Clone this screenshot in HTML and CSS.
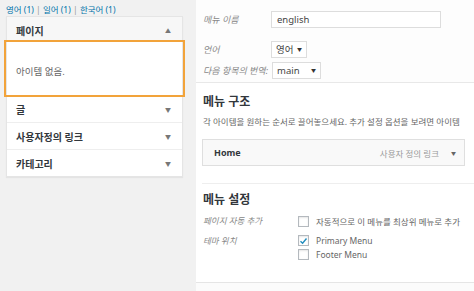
FILE: index.html
```html
<!DOCTYPE html>
<html lang="ko">
<head>
<meta charset="utf-8">
<link rel="stylesheet" href="styles.css">
</head>
<body>
<div class="page">
  <div class="left">
    <div class="langs"><a>영어 (1)</a> <span class="sep">|</span> <a>일어 (1)</a> <span class="sep">|</span> <a>한국어 (1)</a></div>
    <div class="accordion">
      <div class="acc-head open"><span>페이지</span><span class="arrow">▲</span></div>
      <div class="acc-body">아이템 없음.</div>
      <div class="acc-head"><span>글</span><span class="arrow">▼</span></div>
      <div class="acc-head"><span>사용자정의 링크</span><span class="arrow">▼</span></div>
      <div class="acc-head last"><span>카테고리</span><span class="arrow">▼</span></div>
    </div>
  </div>
  <div class="right">
    <div class="menu-header">
      <div class="field r1"><span class="lbl">메뉴 이름</span><span class="input">english</span></div>
      <div class="field r2"><span class="lbl">언어</span><span class="select s-lang">영어<i>▼</i></span></div>
      <div class="field r3"><span class="lbl">다음 항목의 번역:</span><span class="select s-main">main<i>▼</i></span></div>
    </div>
    <div class="menu-body">
      <h3 class="title">메뉴 구조</h3>
      <p class="desc">각 아이템을 원하는 순서로 끌어놓으세요. 추가 설정 옵션을 보려면 아이템</p>
      <div class="item"><span class="item-title">Home</span><span class="item-type">사용자 정의 링크</span><span class="item-arrow">▼</span></div>
      <div class="settings">
        <h3 class="title">메뉴 설정</h3>
        <div class="set-row first"><span class="lbl">페이지 자동 추가</span><span class="opt"><span class="cb"></span>자동적으로 이 메뉴를 최상위 메뉴로 추가</span></div>
        <div class="set-row"><span class="lbl">테마 위치</span>
          <span class="opts">
            <span class="opt"><span class="cb checked"><svg viewBox="0 0 12 12" width="10" height="10"><path d="M2 6.2 L4.8 9 L10 2.6" fill="none" stroke="#1e8cbe" stroke-width="1.8"/></svg></span>Primary Menu</span>
            <span class="opt"><span class="cb"></span>Footer Menu</span>
          </span>
        </div>
      </div>
    </div>
    <div class="menu-footer"></div>
  </div>
</div>
</body>
</html>
```
FILE: styles.css
```css
* { box-sizing: border-box; }
html, body { margin: 0; padding: 0; }
body {
  background: #f1f1f1;
  font-family: "Noto Sans", "Noto Sans CJK KR", sans-serif;
  color: #555;
  width: 474px;
  height: 291px;
  overflow: hidden;
}
.page { display: flex; align-items: flex-start; }
.left { width: 177px; margin-left: 6px; flex: none; }
.langs {
  height: 16px;
  font-size: 8.5px;
  line-height: 16px;
  padding-top: 2px;
  color: #0073aa;
  white-space: nowrap;
}
.langs .sep { color: #999; }
.accordion {
  background: #fff;
  border: 1px solid #e5e5e5;
  box-shadow: 0 1px 1px rgba(0,0,0,0.05);
}
.acc-head {
  height: 27px;
  display: flex;
  align-items: center;
  justify-content: space-between;
  padding: 0 11px 0 9px;
  font-size: 10px;
  font-weight: bold;
  color: #32373c;
  border-top: 1px solid #eee;
  background: #fff;
}
.acc-head.open { border-top: none; background: #f7f7f7; height: 25px; padding-top: 1px; }
.arrow { font-size: 6px; color: #777; font-weight: normal; }
.acc-body {
  height: 53px;
  outline: 2px solid #f2a33a;
  display: flex;
  align-items: center;
  padding: 4px 10px 0;
  font-size: 9.5px;
  color: #666;
  position: relative;
  z-index: 1;
  margin: 0 -1px;
}
.right {
  margin-left: 13px;
  flex: 1;
  background: #fff;
  min-width: 0;
}
.menu-header {
  background: #fdfdfd;
  border-bottom: 1px solid #e8e8e8;
  padding: 11px 0 6px 7px;
  height: 83px;
}
.field { display: flex; align-items: center; }
.field .lbl { width: 68px; flex: none; font-style: italic; font-size: 9px; color: #888; white-space: nowrap; }
.r2 { margin-top: 13px; }
.r3 { margin-top: 4px; }
.input {
  width: 170px; height: 17px; border: 1px solid #ddd; background: #fff;
  font-size: 9.5px; color: #444; padding-left: 5px; line-height: 15px;
}
.select {
  height: 17px; border: 1px solid #ddd; background: #fff;
  font-size: 9.5px; color: #444; padding: 0 4px; line-height: 15px;
  display: flex; justify-content: space-between; align-items: center;
}
.select i { font-style: normal; font-size: 5px; color: #333; }
.s-lang { width: 36px; }
.s-main { width: 49px; margin-left: 1px; }
.menu-body { padding: 0 0 0 7px; }
.title { margin: 0; font-size: 12px; font-weight: bold; color: #32373c; }
.menu-body > .title { padding-top: 9px; }
.desc {
  margin: 5px 0 0; font-size: 8.5px; color: #666; white-space: nowrap; overflow: hidden;
}
.item {
  margin: 12px 0 0 -1px;
  width: 263px;
  height: 27px;
  background: #f9f9f9;
  border: 1px solid #dfdfdf;
  display: flex; align-items: center;
  padding: 0 8px 0 11px;
  font-size: 9px;
}
.item-title { font-weight: bold; color: #32373c; flex: 1; }
.item-type { color: #999; font-size: 8.5px; margin-right: 12px; }
.item-arrow { font-size: 5px; color: #666; }
.settings { margin-top: 17px; border-top: 1px solid #eee; margin-left: -1px; padding: 6px 0 0 1px; height: 99px; }
.set-row { display: flex; margin-top: 6px; }
.set-row.first { margin-top: 6px; }
.set-row .lbl { width: 95px; flex: none; font-style: italic; font-size: 8.5px; color: #888; line-height: 14px; }
.opts { display: flex; flex-direction: column; }
.opt { display: flex; align-items: center; font-size: 8.5px; color: #666; height: 14px; white-space: nowrap; }
.opts .opt { height: 13.5px; }
.cb {
  width: 11px; height: 11px; border: 1px solid #b4b9be; background: #fff;
  margin-right: 7px; display: flex; align-items: center; justify-content: center;
  box-shadow: inset 0 1px 2px rgba(0,0,0,0.1);
}
.menu-footer { border-top: 1px solid #e5e5e5; height: 9px; background: #fbfbfb; }
```
